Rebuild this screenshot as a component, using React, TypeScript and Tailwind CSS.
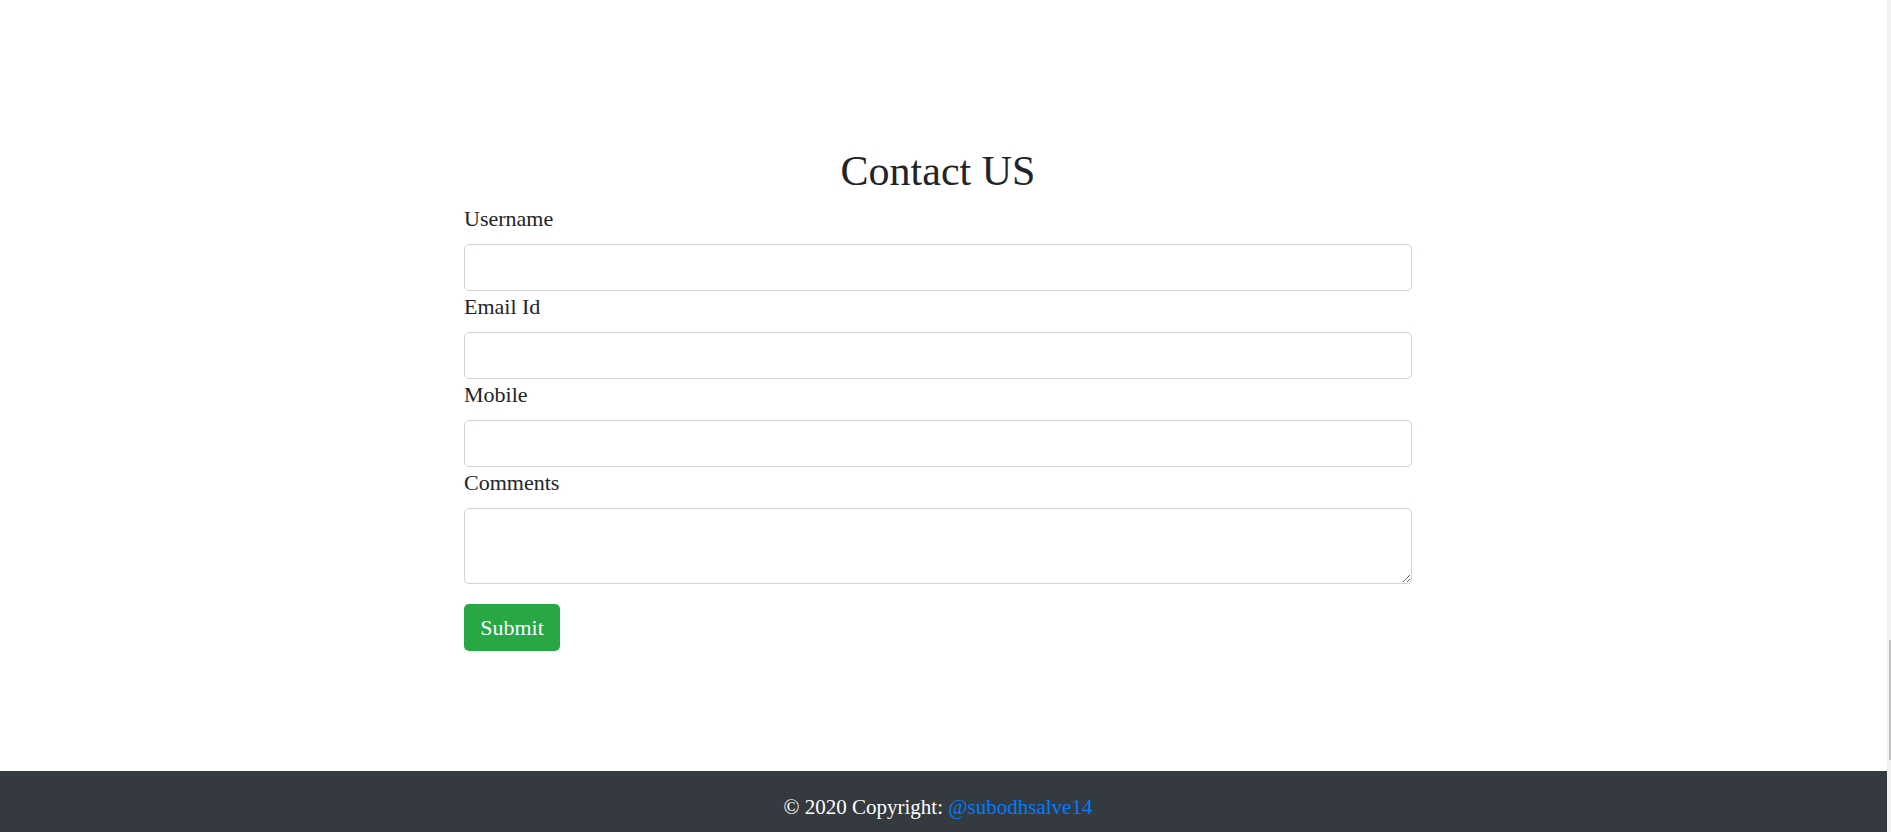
import React from 'react'

const serif = { fontFamily: '"Liberation Serif", "DejaVu Serif", serif' }

function Field({ label, textarea }: { label: string; textarea?: boolean }) {
  return (
    <div className="flex flex-col">
      <label className="text-[22px] leading-[32px] mb-[9px] text-[#212529]">{label}</label>
      {textarea ? (
        <textarea className="w-full h-[76px] border border-[#ced4da] rounded-[5px] bg-white outline-none px-3 py-2" />
      ) : (
        <input type="text" className="w-full h-[47px] border border-[#ced4da] rounded-[5px] bg-white outline-none px-3" />
      )}
    </div>
  )
}

export default function App() {
  return (
    <div className="flex w-full h-[832px] overflow-hidden bg-white" style={serif}>
      <div className="flex flex-col w-[1887px] h-full">
        <main className="flex-1 pt-[146px]">
          <form className="ml-[464px] w-[948px] flex flex-col" onSubmit={(e) => e.preventDefault()}>
            <h1 className="text-center text-[42px] leading-[50px] mb-[7px] text-[#212529]">Contact US</h1>
            <Field label="Username" />
            <Field label="Email Id" />
            <Field label="Mobile" />
            <Field label="Comments" textarea />
            <div className="mt-[20px]">
              <button
                type="submit"
                className="w-[96px] h-[47px] rounded-[5px] bg-[#28a745] text-white text-[22px] leading-[47px]"
              >
                Submit
              </button>
            </div>
          </form>
        </main>
        <footer className="h-[61px] bg-[#343a40] pt-[20px] pr-[11px] text-center text-white text-[21px] leading-[32px]">
          © 2020 Copyright: <a href="#" className="text-[#007bff]">@subodhsalve14</a>
        </footer>
      </div>
      <div className="flex-1 bg-[#f1f1f1] flex justify-end">
        <div className="w-[2px] h-[120px] mt-[640px] bg-[#c1c1c1]" />
      </div>
    </div>
  )
}
